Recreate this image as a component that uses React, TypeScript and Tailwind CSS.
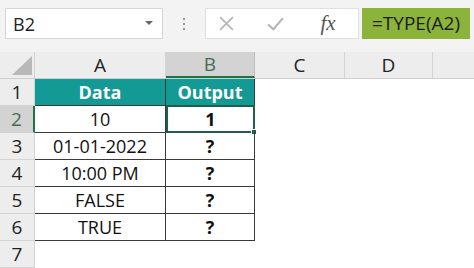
import React from 'react';

const COLS = 'grid grid-cols-[35px_131px_89px_90px_88px_1fr]';

const rows: { data: string; out: string }[] = [
  { data: '10', out: '1' },
  { data: '01-01-2022', out: '?' },
  { data: '10:00 PM', out: '?' },
  { data: 'FALSE', out: '?' },
  { data: 'TRUE', out: '?' },
];

const RowHead: React.FC<{ n: number; active?: boolean }> = ({ n, active }) => (
  <div
    className={`flex items-center justify-center border-b border-r border-[#d4d4d4] text-[19px] ${
      active ? 'bg-[#d3d3d3] text-[#3f6f55] border-r-2 border-r-[#217346]' : 'bg-[#ededed] text-[#222]'
    }`}
  >
    {n}
  </div>
);

const App: React.FC = () => {
  return (
    <div className="w-[474px] h-[268px] overflow-hidden bg-white text-[18px] leading-none" style={{ fontFamily: '"Open Sans", "Noto Sans", sans-serif' }}>
      {/* formula bar */}
      <div className="h-[52px] bg-[#f3f3f3] flex items-start pt-[8px] pl-[5px] pr-[4px]">
        <div className="w-[158px] h-[31px] bg-white border border-[#d6d6d6] flex items-center justify-between pl-[7px] pr-[9px]">
          <span className="text-[18px] text-[#222]">B2</span>
          <svg width="8" height="5" viewBox="0 0 8 5"><path d="M0 0 L8 0 L4 4 Z" fill="#666" /></svg>
        </div>
        <div className="w-[42px] h-[31px] flex flex-col items-center justify-center gap-[3px]">
          <span className="w-[2px] h-[2px] bg-[#9a9a9a]" />
          <span className="w-[2px] h-[2px] bg-[#9a9a9a]" />
          <span className="w-[2px] h-[2px] bg-[#9a9a9a]" />
        </div>
        <div className="w-[154px] h-[31px] bg-white border border-[#e0e0e0] flex items-center">
          <div className="w-[40px] flex justify-center">
            <svg width="15" height="15" viewBox="0 0 14 14"><path d="M1 1 L13 13 M13 1 L1 13" stroke="#b5b5b5" strokeWidth="1.5" /></svg>
          </div>
          <div className="w-[58px] flex justify-center">
            <svg width="17" height="14" viewBox="0 0 16 13"><path d="M1 7 L6 11.5 L15 1" stroke="#b5b5b5" strokeWidth="2" fill="none" /></svg>
          </div>
          <div className="flex-1 flex justify-center pr-[6px]">
            <span className="italic text-[#555] text-[21px]" style={{ fontFamily: '"Liberation Serif", serif' }}>fx</span>
          </div>
        </div>
        <div className="ml-[3px] w-[108px] h-[31px] bg-[#8cb33a] flex items-center justify-center text-[#1d1d1d] text-[19px]">
          =TYPE(A2)
        </div>
      </div>

      {/* column headers */}
      <div className={`${COLS} h-[27px] bg-[#ededed] border-b border-[#cfcfcf] text-[#222] text-[19px]`}>
        <div className="flex items-end justify-end pr-[2px] pb-[3px] border-r border-[#d4d4d4]">
          <svg width="20" height="19" viewBox="0 0 20 19"><path d="M20 0 L20 19 L0 19 Z" fill="#b8b8b8" /></svg>
        </div>
        <div className="flex items-center justify-center border-r border-[#d4d4d4]">A</div>
        <div className="flex items-center justify-center bg-[#d3d3d3] text-[#3f6f55] border-r border-[#bdbdbd] border-b-2 border-b-[#217346]">B</div>
        <div className="flex items-center justify-center border-r border-[#d4d4d4]">C</div>
        <div className="flex items-center justify-center border-r border-[#d4d4d4]">D</div>
        <div />
      </div>

      {/* header row */}
      <div className={`${COLS} h-[27px]`}>
        <RowHead n={1} />
        <div className="flex items-center justify-center bg-[#149a94] text-white font-bold border-r border-b border-[#3a3a3a]">Data</div>
        <div className="flex items-center justify-center bg-[#149a94] text-white font-bold border-r border-b border-[#3a3a3a]">Output</div>
        <div />
        <div />
        <div />
      </div>

      {rows.map((r, i) => (
        <div key={i} className={`${COLS} h-[27px]`}>
          <RowHead n={i + 2} active={i === 0} />
          <div className="flex items-center justify-center text-[#111] border-r border-b border-[#3a3a3a]">{r.data}</div>
          <div
            className={`relative flex items-center justify-center font-bold text-[#111] ${
              i === 0 ? 'border-2 border-[#1f5f4a] -mt-px' : 'border-r border-b border-[#3a3a3a]'
            }`}
          >
            {r.out}
            {i === 0 && <span className="absolute -right-[4px] -bottom-[4px] w-[6px] h-[6px] bg-[#1f5f4a] border border-white" />}
          </div>
          <div />
          <div />
          <div />
        </div>
      ))}

      <div className={`${COLS} h-[27px]`}>
        <RowHead n={7} />
        <div />
      </div>
    </div>
  );
};

export default App;
